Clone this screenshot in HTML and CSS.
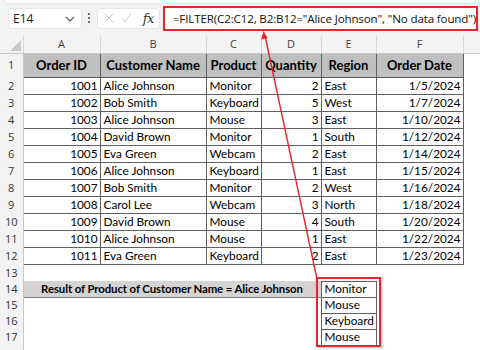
FILE: index.html
```html
<!DOCTYPE html>
<html>
  <head>
    <meta charset="utf-8" />
    <title>FILTER example</title>
    <link rel="stylesheet" href="styles.css">
  </head>
  <body>
    <div class="window">
      <div class="ribbon-edge"></div>

      <div class="formula-bar">
        <div class="name-box">
          <span>E14</span>
          <svg class="chevron" width="10" height="6" viewBox="0 0 10 6">
            <path d="M1 1 L5 5 L9 1" fill="none" stroke="#555" stroke-width="1.1" />
          </svg>
        </div>
        <div class="dots"><i></i><i></i><i></i></div>
        <div class="fx-box">
          <svg width="12" height="12" viewBox="0 0 12 12">
            <path d="M1 1 L11 11 M11 1 L1 11" stroke="#c2c2c2" stroke-width="1.1" />
          </svg>
          <svg width="13" height="12" viewBox="0 0 13 12">
            <path d="M1 6.5 L4.5 10.5 L12 1" fill="none" stroke="#c2c2c2" stroke-width="1.1" />
          </svg>
          <span class="fx">fx</span>
        </div>
        <div class="formula">=FILTER(C2:C12, B2:B12="Alice Johnson", "No data found")</div>
      </div>

      <table class="sheet">
        <colgroup>
          <col style="width:23px" />
          <col style="width:77px" />
          <col style="width:106px" />
          <col style="width:55px" />
          <col style="width:60px" />
          <col style="width:55px" />
          <col style="width:87px" />
          <col style="width:17px" />
        </colgroup>
        <tr class="col-heads">
          <th class="corner"><span class="tri"></span></th>
          <th>A</th><th>B</th><th>C</th><th>D</th><th>E</th><th>F</th><th class="empty"></th>
        </tr>
        <tr class="head-row">
          <th class="rn">1</th>
          <td class="hd">Order ID</td>
          <td class="hd">Customer Name</td>
          <td class="hd">Product</td>
          <td class="hd">Quantity</td>
          <td class="hd">Region</td>
          <td class="hd">Order Date</td>
          <td></td>
        </tr>
        <tr>
          <th class="rn">2</th><td class="c num">1001</td><td class="c">Alice Johnson</td><td class="c">Monitor</td><td class="c num">2</td><td class="c">East</td><td class="c num">1/5/2024</td><td></td>
        </tr>
        <tr>
          <th class="rn">3</th><td class="c num">1002</td><td class="c">Bob Smith</td><td class="c">Keyboard</td><td class="c num">5</td><td class="c">West</td><td class="c num">1/7/2024</td><td></td>
        </tr>
        <tr>
          <th class="rn">4</th><td class="c num">1003</td><td class="c">Alice Johnson</td><td class="c">Mouse</td><td class="c num">3</td><td class="c">East</td><td class="c num">1/10/2024</td><td></td>
        </tr>
        <tr>
          <th class="rn">5</th><td class="c num">1004</td><td class="c">David Brown</td><td class="c">Monitor</td><td class="c num">1</td><td class="c">South</td><td class="c num">1/12/2024</td><td></td>
        </tr>
        <tr>
          <th class="rn">6</th><td class="c num">1005</td><td class="c">Eva Green</td><td class="c">Webcam</td><td class="c num">2</td><td class="c">East</td><td class="c num">1/14/2024</td><td></td>
        </tr>
        <tr>
          <th class="rn">7</th><td class="c num">1006</td><td class="c">Alice Johnson</td><td class="c">Keyboard</td><td class="c num">1</td><td class="c">East</td><td class="c num">1/15/2024</td><td></td>
        </tr>
        <tr>
          <th class="rn">8</th><td class="c num">1007</td><td class="c">Bob Smith</td><td class="c">Monitor</td><td class="c num">2</td><td class="c">West</td><td class="c num">1/16/2024</td><td></td>
        </tr>
        <tr>
          <th class="rn">9</th><td class="c num">1008</td><td class="c">Carol Lee</td><td class="c">Webcam</td><td class="c num">3</td><td class="c">North</td><td class="c num">1/18/2024</td><td></td>
        </tr>
        <tr>
          <th class="rn">10</th><td class="c num">1009</td><td class="c">David Brown</td><td class="c">Mouse</td><td class="c num">4</td><td class="c">South</td><td class="c num">1/20/2024</td><td></td>
        </tr>
        <tr>
          <th class="rn">11</th><td class="c num">1010</td><td class="c">Alice Johnson</td><td class="c">Mouse</td><td class="c num">1</td><td class="c">East</td><td class="c num">1/22/2024</td><td></td>
        </tr>
        <tr>
          <th class="rn">12</th><td class="c num">1011</td><td class="c">Eva Green</td><td class="c">Keyboard</td><td class="c num">2</td><td class="c">East</td><td class="c num">1/23/2024</td><td></td>
        </tr>
        <tr>
          <th class="rn">13</th><td colspan="7"></td>
        </tr>
        <tr class="short">
          <th class="rn">14</th>
          <td class="result-label" colspan="4">Result of Product of Customer Name = Alice Johnson</td>
          <td class="c">Monitor</td><td></td><td></td>
        </tr>
        <tr class="short">
          <th class="rn">15</th><td colspan="4"></td><td class="c">Mouse</td><td></td><td></td>
        </tr>
        <tr class="short">
          <th class="rn">16</th><td colspan="4"></td><td class="c">Keyboard</td><td></td><td></td>
        </tr>
        <tr class="short">
          <th class="rn">17</th><td colspan="4"></td><td class="c">Mouse</td><td></td><td></td>
        </tr>
        <tr>
          <th class="rn"></th><td colspan="7"></td>
        </tr>
      </table>

      <!-- annotation: red box around the spill range and arrow to the formula -->
      <div class="spill-mark"></div>
      <svg class="arrow" width="480" height="350" viewBox="0 0 480 350">
        <line x1="265.5" y1="38" x2="317" y2="279" stroke="#e8272c" stroke-width="1.4" />
        <path d="M263.6 31 L261.2 39.5 L267.6 38.2 Z" fill="#e8272c" />
      </svg>
    </div>
  </body>
</html>
```

FILE: styles.css
```css
html,
body {
  margin: 0;
  padding: 0;
}

body {
  width: 480px;
  height: 350px;
  overflow: hidden;
  background: #fff;
  font-family: "Lato", "Open Sans", sans-serif;
  color: #000;
}

.window {
  position: relative;
  width: 480px;
  height: 350px;
  background: #f3f3f3;
}

.ribbon-edge {
  height: 3px;
  background: #fff;
  border-radius: 0 0 7px 7px;
  border: 1px solid #e4e4e4;
  border-top: 0;
  margin: 0 4px;
}

/* formula bar */
.formula-bar {
  display: flex;
  align-items: center;
  height: 28px;
  padding: 0 2px 0 8px;
}

.name-box {
  box-sizing: border-box;
  width: 86px;
  height: 21px;
  background: #fff;
  border: 1px solid #e6e6e6;
  border-radius: 4px;
  display: flex;
  align-items: center;
  justify-content: space-between;
  padding: 0 6px 0 4px;
  font-family: "Open Sans", sans-serif;
  font-size: 12px;
  color: #222;
}

.chevron {
  margin-top: 1px;
}

.dots {
  width: 18px;
  display: flex;
  flex-direction: column;
  align-items: center;
  gap: 2px;
}

.dots i {
  display: block;
  width: 2px;
  height: 2px;
  background: #444;
  border-radius: 1px;
}

.fx-box {
  box-sizing: border-box;
  width: 63px;
  height: 21px;
  background: #fff;
  border: 1px solid #e6e6e6;
  border-radius: 4px;
  display: flex;
  align-items: center;
  gap: 7px;
  padding: 0 5px 0 6px;
}

.fx {
  font-family: "DejaVu Serif", "Liberation Serif", serif;
  font-style: italic;
  font-size: 13px;
  color: #333;
  margin-left: 4px;
  letter-spacing: -0.5px;
}

.formula {
  box-sizing: border-box;
  flex: 1;
  margin-left: 3px;
  height: 25px;
  background: #fff;
  border: 2px solid #e5272d;
  padding: 0 0 0 8px;
  display: flex;
  align-items: center;
  font-family: "Open Sans", sans-serif;
  font-size: 11.6px;
  letter-spacing: -0.15px;
  color: #111;
  white-space: nowrap;
}

/* grid */
.sheet {
  margin-top: 4px;
  border-collapse: collapse;
  table-layout: fixed;
  width: 480px;
  background: #fff;
  font-size: 11.8px;
  line-height: 14px;
}

.sheet td,
.sheet th {
  padding: 0;
  white-space: nowrap;
  overflow: hidden;
}

.col-heads {
  height: 16px;
}

.col-heads th {
  background: #f3f3f3;
  border-left: 1px solid #d6d6d6;
  border-bottom: 1px solid #c6c6c6;
  font-family: "Open Sans", sans-serif;
  font-weight: normal;
  font-size: 11px;
  color: #444;
}

.col-heads .corner {
  border-left: 0;
  position: relative;
}

.tri {
  position: absolute;
  right: 2px;
  bottom: 2px;
  width: 0;
  height: 0;
  border-left: 11px solid transparent;
  border-bottom: 11px solid #c9c9c9;
}

.sheet tr {
  height: 17px;
}

.sheet .head-row {
  height: 24px;
}

.sheet .short {
  height: 16px;
}

.short .rn {
  height: 15px;
}

.rn {
  height: 16px;
  background: #f3f3f3;
  border-right: 1px solid #c6c6c6;
  font-family: "Open Sans", sans-serif;
  font-weight: normal;
  font-size: 11px;
  line-height: 14px;
  color: #333;
  text-align: center;
}

.hd {
  background: #bfbfbf;
  border: 1px solid #5f5f5f;
  font-weight: bold;
  font-size: 13px;
  text-align: center;
}

.c {
  border: 1px solid #5f5f5f;
  padding: 0 2px 0 3px !important;
}

.num {
  text-align: right;
}

.result-label {
  background: #d4d4d4;
  border-bottom: 1px solid #7a7a7a;
  font-weight: bold;
  font-size: 11.4px;
  letter-spacing: -0.1px;
  text-align: center;
}

/* annotation overlays */
.spill-mark {
  position: absolute;
  left: 316px;
  top: 277px;
  width: 61px;
  height: 66px;
  border: 2px solid #e5272d;
  box-shadow: 1px 1px 2px rgba(0, 0, 0, 0.25);
}

.arrow {
  position: absolute;
  left: 0;
  top: 0;
  pointer-events: none;
}
```
